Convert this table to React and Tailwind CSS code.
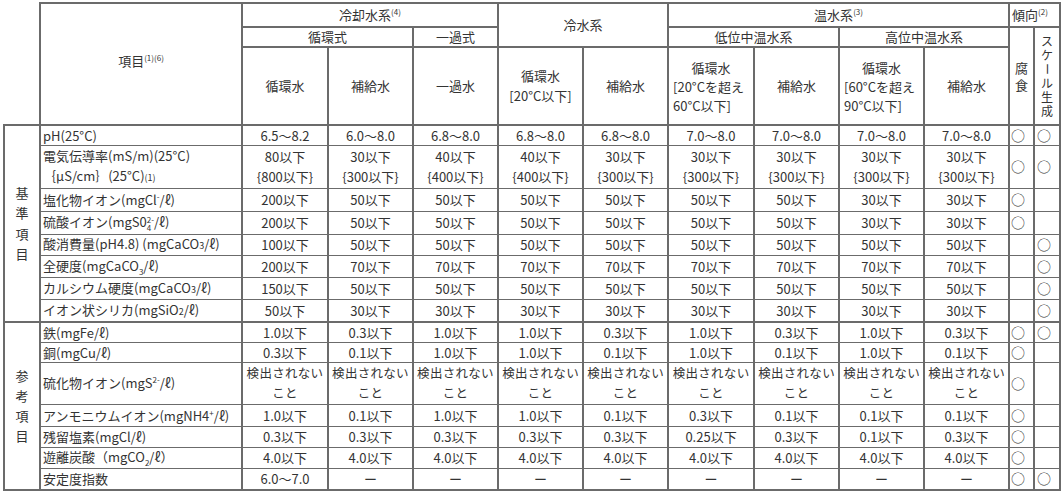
import React from "react";

const B = "border-[#6b6b6b]";
const HEAD = `border-2 ${B} text-center align-middle font-normal leading-[18px] p-0`;
const CELL = `border-x-2 border-y ${B} text-center align-middle p-0`;

const Sup = ({ children }) => <span className="align-super text-[8px] leading-none">{children}</span>;
const Sub = ({ children }) => <span className="align-sub text-[8px] leading-none">{children}</span>;
const Small = ({ children }) => <span className="text-[9px]">{children}</span>;

const two = (a, b) => (
  <>
    <div className="w-full text-center">{a}</div>
    <div className="w-full text-center">{b}</div>
  </>
);

const rows = [
  {
    h: "h-[20px]",
    label: "pH(25°C)",
    v: ["6.5〜8.2", "6.0〜8.0", "6.8〜8.0", "6.8〜8.0", "6.8〜8.0", "7.0〜8.0", "7.0〜8.0", "7.0〜8.0", "7.0〜8.0"],
    f: true,
    s: true,
  },
  {
    h: "h-[42px]",
    label: (
      <>
        電気伝導率(mS/m)(25°C)
        <br />
        ｛μS/cm｝(25°C)<Small>(1)</Small>
      </>
    ),
    v: [
      two("80以下", "{800以下}"),
      two("30以下", "{300以下}"),
      two("40以下", "{400以下}"),
      two("40以下", "{400以下}"),
      two("30以下", "{300以下}"),
      two("30以下", "{300以下}"),
      two("30以下", "{300以下}"),
      two("30以下", "{300以下}"),
      two("30以下", "{300以下}"),
    ],
    f: true,
    s: true,
  },
  {
    h: "h-[23px]",
    label: (
      <>
        塩化物イオン(mgCl<Sup>-</Sup>/ℓ)
      </>
    ),
    v: ["200以下", "50以下", "50以下", "50以下", "50以下", "50以下", "50以下", "30以下", "30以下"],
    f: true,
  },
  {
    h: "h-[23px]",
    label: (
      <>
        硫酸イオン(mgS0
        <span className="inline-flex flex-col align-middle text-[8px] leading-[8px]">
          <span>2-</span>
          <span>4</span>
        </span>
        /ℓ)
      </>
    ),
    v: ["200以下", "50以下", "50以下", "50以下", "50以下", "50以下", "50以下", "30以下", "30以下"],
    f: true,
  },
  {
    h: "h-[21px]",
    label: (
      <>
        酸消費量(pH4.8) (mgCaCO<Small>3</Small>/ℓ)
      </>
    ),
    v: ["100以下", "50以下", "50以下", "50以下", "50以下", "50以下", "50以下", "50以下", "50以下"],
    s: true,
  },
  {
    h: "h-[22px]",
    label: (
      <>
        全硬度(mgCaCO<Sub>3</Sub>/ℓ)
      </>
    ),
    v: ["200以下", "70以下", "70以下", "70以下", "70以下", "70以下", "70以下", "70以下", "70以下"],
    s: true,
  },
  {
    h: "h-[22px]",
    label: (
      <>
        カルシウム硬度(mgCaCO<Small>3</Small>/ℓ)
      </>
    ),
    v: ["150以下", "50以下", "50以下", "50以下", "50以下", "50以下", "50以下", "50以下", "50以下"],
    s: true,
  },
  {
    h: "h-[23px]",
    label: (
      <>
        イオン状シリカ(mgSiO<Small>2</Small>/ℓ)
      </>
    ),
    v: ["50以下", "30以下", "30以下", "30以下", "30以下", "30以下", "30以下", "30以下", "30以下"],
    s: true,
  },
  {
    h: "h-[20px]",
    label: "鉄(mgFe/ℓ)",
    v: ["1.0以下", "0.3以下", "1.0以下", "1.0以下", "0.3以下", "1.0以下", "0.3以下", "1.0以下", "0.3以下"],
    f: true,
    s: true,
  },
  {
    h: "h-[20px]",
    label: "銅(mgCu/ℓ)",
    v: ["0.3以下", "0.1以下", "1.0以下", "1.0以下", "0.1以下", "1.0以下", "0.1以下", "1.0以下", "0.1以下"],
    f: true,
  },
  {
    h: "h-[42px]",
    label: (
      <>
        硫化物イオン(mgS<Sup>2-</Sup>/ℓ)
      </>
    ),
    v: Array(9).fill("検出されない こと"),
    k: true,
    f: true,
  },
  {
    h: "h-[22px]",
    label: (
      <>
        アンモニウムイオン(mgNH4<Sup>+</Sup>/ℓ)
      </>
    ),
    v: ["1.0以下", "0.1以下", "1.0以下", "1.0以下", "0.1以下", "0.3以下", "0.1以下", "0.1以下", "0.1以下"],
    f: true,
  },
  {
    h: "h-[21px]",
    label: "残留塩素(mgCl/ℓ)",
    v: ["0.3以下", "0.3以下", "0.3以下", "0.3以下", "0.3以下", "0.25以下", "0.3以下", "0.1以下", "0.3以下"],
    f: true,
  },
  {
    h: "h-[21px]",
    label: (
      <>
        遊離炭酸（mgCO<Sub>2</Sub>/ℓ）
      </>
    ),
    v: Array(9).fill("4.0以下"),
    f: true,
  },
  {
    h: "h-[22px]",
    label: "安定度指数",
    v: ["6.0〜7.0", "ー", "ー", "ー", "ー", "ー", "ー", "ー", "ー"],
    f: true,
    s: true,
  },
];

const widths = ["w-[36px]", "w-[202px]", "w-[86px]", "w-[85px]", "w-[85px]", "w-[85px]", "w-[85px]", "w-[86px]", "w-[85px]", "w-[85px]", "w-[85px]", "w-[25px]", "w-[26px]"];

// vertical label: one character per line
function Stack({ chars, lead, size = "" }) {
  return (
    <div className={`flex flex-col items-center ${lead} ${size}`}>
      {chars.map((c, i) =>
        c === "ー" ? (
          <span key={i} className="inline-block rotate-90">
            ー
          </span>
        ) : (
          <span key={i}>{c}</span>
        )
      )}
    </div>
  );
}

export default function App() {
  return (
    <div className="bg-white w-[1062px] h-[498px] pl-[3px] pt-[2px] text-[13px] text-[#333]" style={{ fontFamily: '"Noto Sans CJK JP", "Noto Sans", sans-serif' }}>
      <table className="table-fixed border-collapse w-[1056px]">
        <colgroup>
          {widths.map((w, i) => (
            <col key={i} className={w} />
          ))}
        </colgroup>
        <thead>
          <tr className="h-[24px]">
            <th rowSpan={3} className="p-0 border-0" />
            <th rowSpan={3} className={`${HEAD} pb-[6px]`}>
              項目<Sup>(1)(6)</Sup>
            </th>
            <th colSpan={3} className={HEAD}>
              冷却水系<Sup>(4)</Sup>
            </th>
            <th colSpan={2} rowSpan={2} className={HEAD}>
              冷水系
            </th>
            <th colSpan={4} className={HEAD}>
              温水系<Sup>(3)</Sup>
            </th>
            <th colSpan={2} className={`${HEAD} text-left pl-[2px]`}>
              傾向<Sup>(2)</Sup>
            </th>
          </tr>
          <tr className="h-[20px]">
            <th colSpan={2} className={`${HEAD} leading-[16px]`}>循環式</th>
            <th className={`${HEAD} leading-[16px]`}>一過式</th>
            <th colSpan={2} className={`${HEAD} leading-[16px]`}>低位中温水系</th>
            <th colSpan={2} className={`${HEAD} leading-[16px]`}>高位中温水系</th>
            <th rowSpan={2} className={HEAD}>
              <Stack chars={["腐", "食"]} lead="leading-[17px]" />
            </th>
            <th rowSpan={2} className={HEAD}>
              <Stack chars={["ス", "ケ", "ー", "ル", "生", "成"]} lead="leading-[14px]" size="text-[12px]" />
            </th>
          </tr>
          <tr className="h-[78px]">
            <th className={HEAD}>循環水</th>
            <th className={HEAD}>補給水</th>
            <th className={HEAD}>一過水</th>
            <th className={`${HEAD} leading-[20px]`}>
              循環水
              <br />
              [20°C以下]
            </th>
            <th className={HEAD}>補給水</th>
            <th className={`${HEAD} leading-[19px]`}>
              循環水
              <br />
              <span className="block text-left pl-[4px]">
                [20°Cを超え
                <br />
                60°C以下]
              </span>
            </th>
            <th className={HEAD}>補給水</th>
            <th className={`${HEAD} leading-[19px]`}>
              循環水
              <br />
              <span className="block text-left pl-[4px]">
                [60°Cを超え
                <br />
                90°C以下]
              </span>
            </th>
            <th className={HEAD}>補給水</th>
          </tr>
        </thead>
        <tbody>
          {rows.map((r, i) => {
            const top = i === 0 || i === 8 ? "border-t-2" : "";
            const bottom = i === rows.length - 1 ? "border-b-2" : "";
            const lead = r.h === "h-[42px]" ? "leading-[20px]" : "leading-[17px]";
            return (
              <tr key={i} className={r.h}>
                {i === 0 && (
                  <td rowSpan={8} className={`${CELL} border-y-2`}>
                    <Stack chars={["基", "準", "項", "目"]} lead="leading-[20.5px]" />
                  </td>
                )}
                {i === 8 && (
                  <td rowSpan={7} className={`${CELL} border-y-2`}>
                    <Stack chars={["参", "考", "項", "目"]} lead="leading-[20px]" />
                  </td>
                )}
                <td className={`${CELL} ${top} ${bottom} ${lead} text-left pl-[2px] whitespace-nowrap`}>{r.label}</td>
                {r.v.map((v, j) => (
                  <td key={j} className={`${CELL} ${top} ${bottom} ${lead} ${r.k ? "text-[12.5px] tracking-[0.3px] break-all" : "whitespace-nowrap"}`}>
                    {v}
                  </td>
                ))}
                <td className={`${CELL} ${top} ${bottom} leading-[17px] text-[14px] text-left pl-[1px]`}>{r.f ? "○" : ""}</td>
                <td className={`${CELL} ${top} ${bottom} leading-[17px] text-[14px] text-left pl-[2px]`}>{r.s ? "○" : ""}</td>
              </tr>
            );
          })}
        </tbody>
      </table>
    </div>
  );
}
